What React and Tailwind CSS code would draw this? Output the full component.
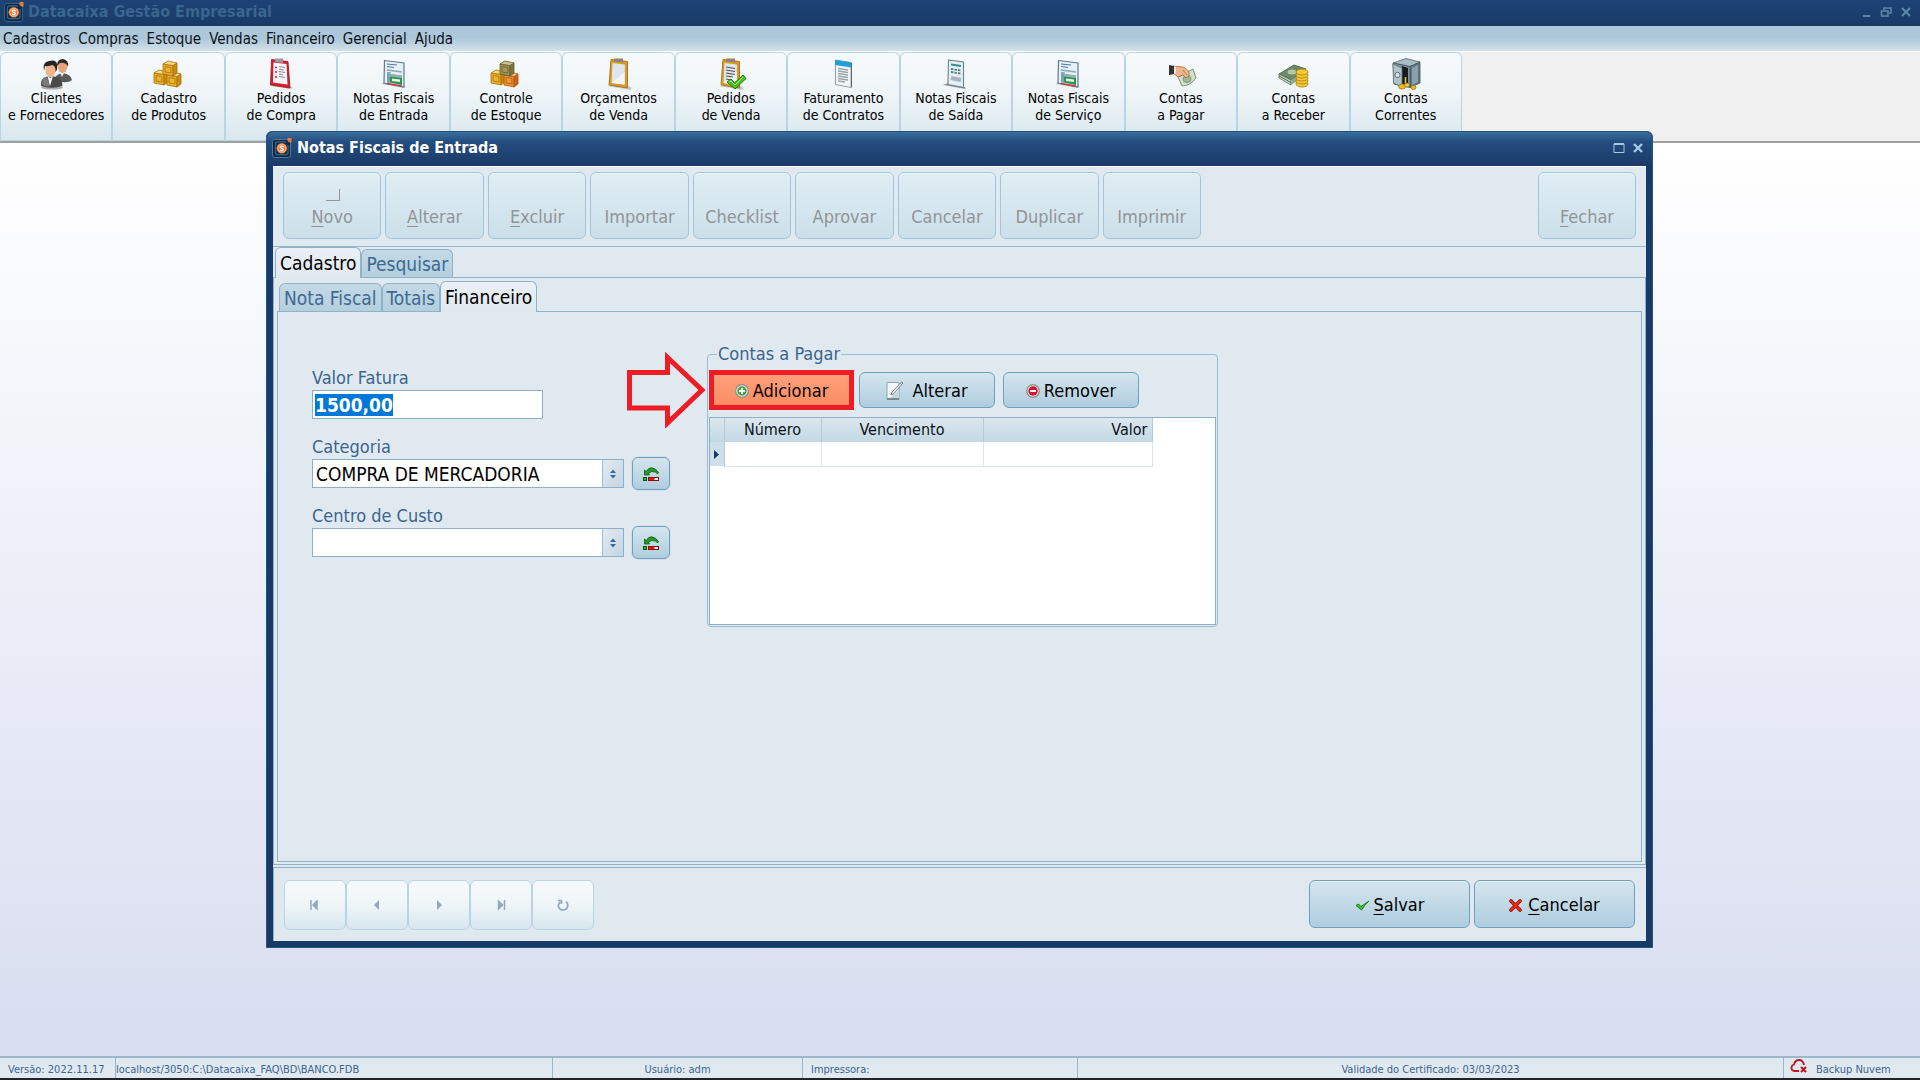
import React from "react";

const MENU = ["Cadastros", "Compras", "Estoque", "Vendas", "Financeiro", "Gerencial", "Ajuda"];

function AppLogo({ dim }) {
  return (
    <svg viewBox="0 0 20 20" className="w-5 h-5 shrink-0" aria-hidden="true">
      <rect x="0.5" y="1.5" width="18" height="18" rx="2.5" fill="#0b2c4a" stroke={dim ? "#3a607f" : "#55748f"} />
      <path d="M14 3.8H5.5Q3.5 3.8 3.5 6V14.5Q3.5 16.6 5.5 16.6H14Q16 16.6 16 14.5V7" fill="none" stroke="#41647f" strokeWidth="1.2" />
      <circle cx="9.8" cy="10.3" r="5.2" fill="#ee7437" />
      <circle cx="9.8" cy="10.3" r="4.4" fill="#fbc4a0" />
      <circle cx="9.8" cy="10.3" r="3.5" fill="#f0762f" />
      <path d="M11.8 8.8Q9.8 7.5 8.300 8.6Q7.800 10 9.8 10.3Q12 10.7 11.300 12.100Q9.8 13.100 7.800 11.9" fill="none" stroke="#fff" strokeWidth="1.2" />
      <path d="M15.5 0H19.5V4.5H17.5L15.5 3Z" fill="#ef7a35" />
    </svg>
  );
}

/* ---------- toolbar icons ---------- */

function PeopleIcon() {
  return (
    <svg viewBox="0 0 32 32" className="w-8 h-8" aria-hidden="true">
      <path d="M14 24Q15 16 22 15Q31 16 32 22Q29 25 22 24Z" fill="#5b5b5b" />
      <ellipse cx="22.5" cy="9" rx="4.6" ry="6" fill="#e8a27c" />
      <path d="M17 8Q17 1 23 1Q29 2 28 9Q26 4 20 5Z" fill="#292929" />
      <path d="M20 15L22 19L24 15Z" fill="#eee" />
      <ellipse cx="12" cy="29.5" rx="11" ry="2" fill="#aaa" />
      <path d="M1 28Q0 20 7 18.5H15Q23 20 22.500 28Q12 31.500 1 28Z" fill="#4a4a4a" />
      <path d="M2 26Q2 20 7 19L10 28Q4 29 2 26Z" fill="#7b7b7b" />
      <ellipse cx="10.5" cy="12" rx="5" ry="7" fill="#f3b28c" />
      <path d="M4 13Q2 4 9 3Q16 1 17 6Q18 11 15.500 14Q16 8 12 7Q7 9 5 8Z" fill="#252525" />
      <path d="M7.500 18L10 28L13 18L10.500 20Z" fill="#fafafa" />
    </svg>
  );
}

function Crate({ x, y, face, top, side, line }) {
  return (
    <g transform={`translate(${x} ${y})`}>
      <path d="M0 3L10 4.500V15L0 13Z" fill={face} stroke={line} strokeWidth=".8" />
      <path d="M10 4.500L14 2V12L10 15Z" fill={side} stroke={line} strokeWidth=".8" />
      <path d="M0 3L5 0L14 2L10 4.500Z" fill={top} stroke={line} strokeWidth=".8" />
      <path d="M2 5.500L8 6.500V12L2 11Z" fill="none" stroke={line} strokeWidth=".8" />
    </g>
  );
}

const GOLD = { face: "#e9b32c", top: "#f7d978", side: "#c98a12", line: "#a9700c" };
const OLIVE = { face: "#a3985a", top: "#cfc68e", side: "#7d733c", line: "#665c2c" };
const ORANGE = { face: "#f0953a", top: "#f9c27f", side: "#cc6518", line: "#b0540f" };

function CratesIcon({ topCrate = GOLD, rightCrate = GOLD }) {
  return (
    <svg viewBox="0 0 32 32" className="w-8 h-8" aria-hidden="true">
      <Crate x={1} y={12} {...GOLD} />
      <Crate x={14} y={14} {...rightCrate} />
      <Crate x={10} y={3} {...topCrate} />
    </svg>
  );
}

function RedClipboardIcon() {
  return (
    <svg viewBox="0 0 32 32" className="w-8 h-8" aria-hidden="true">
      <path d="M6 28L25 31L28 30L24 27Z" fill="#c9c9c9" />
      <path d="M6.500 1.500L23 3.500L25 30L5.500 27Z" fill="#d3202f" stroke="#a5121f" strokeWidth=".8" />
      <path d="M8.500 4.500L21.500 6L22.500 26.500L8 24.500Z" fill="#f6f6f8" />
      <path d="M10 0.500H18V5L10 4Z" fill="#99989f" />
      <path d="M10 9.500H12M10 14H12M10 19H12" stroke="#d3202f" strokeWidth="1.600" />
      <path d="M14 8.500L20 9.500M14 11L19 12M14 13.500L20 14.500M14 16L18 17M14 18.500L20 19.500" stroke="#8e8e98" strokeWidth="1.200" />
    </svg>
  );
}

function InvoiceIcon() {
  return (
    <svg viewBox="0 0 32 32" className="w-8 h-8" aria-hidden="true">
      <path d="M4 26L26 30L27 28L6 24Z" fill="#b4b8bc" />
      <path d="M6.500 2.500L26 5V29L6 25Z" fill="#e6f0f6" stroke="#5f7d90" strokeWidth="1.200" />
      <path d="M9 6L19 7M9 8.500L16 9.500" stroke="#5571ad" strokeWidth="1.200" />
      <path d="M9 12L24 14M9 14.500L13 15" stroke="#8ca6b8" strokeWidth="1.600" />
      <path d="M9 15H11.500V25L9 24.500Z" fill="#7e9cc9" />
      <path d="M11.500 16L24 17.500V27L11.500 24.500Z" fill="#2c9650" />
      <path d="M12 16L24 17.500V20L12 18.500Z" fill="#9dafba" />
      <path d="M14 20.500L22 21.500V24L14 23Z" fill="#e9f4ee" />
      <path d="M9 25.500L24 28" stroke="#d23a3a" strokeWidth="1.400" />
    </svg>
  );
}

function GoldClipboardIcon({ checked }) {
  return (
    <svg viewBox="0 0 32 32" className="w-8 h-8" aria-hidden="true">
      <path d="M4 28L27 32L29 30L24 27Z" fill="#c8c8c8" />
      <path d="M8 1.500L24.500 3.500V30L6 27Z" fill="#d99a2b" stroke="#a86f17" strokeWidth=".9" />
      <path d="M9.500 5L22 6.500L21.500 26.500L8.500 25Z" fill="#dfe6ea" />
      <path d="M22 14L21.500 26.500L8.500 25Z" fill="#f4f7f8" />
      <path d="M11 0.500H20V4.500L11 3.500Z" fill="#8e8371" />
      {checked && (
        <>
          <path d="M11 9L20 10.500M11 12L20 13.500M11 15L20 16.500M11 18L18 19M11 21L17 22" stroke="#535353" strokeWidth="1.200" />
          <path d="M12 24L16 21L19.500 25L28 17L31 20.500L20 31Z" fill="#45c420" stroke="#1c7d10" strokeWidth="1" />
          <path d="M14 24L16 23L20 27L28 19" fill="none" stroke="#a6ee85" strokeWidth="1" />
        </>
      )}
    </svg>
  );
}

function ContractIcon() {
  return (
    <svg viewBox="0 0 32 32" className="w-8 h-8" aria-hidden="true">
      <path d="M8.500 2L24 4.500V29.500L8.500 26.500Z" fill="#f2f5f7" stroke="#7b8a94" strokeWidth=".8" />
      <path d="M8 2L24.500 4.500V9.500L8 7Z" fill="#1e9fda" />
      <path d="M11 10.500L21 12M11 13L21 14.500M11 15.500L21 17M11 18L21 19.500M11 20.500L21 22M11 23L18 24" stroke="#9aa3a9" strokeWidth="1.300" />
      <path d="M24.500 5V29.500" stroke="#5f6b73" strokeWidth="1" />
    </svg>
  );
}

function OutgoingIcon() {
  return (
    <svg viewBox="0 0 32 32" className="w-8 h-8" aria-hidden="true">
      <path d="M3 27L8 25L25 29L26 31Z" fill="#969ca0" />
      <path d="M8.500 2L23.500 4V29.500L8 26.500Z" fill="#e6eff3" stroke="#6d818b" strokeWidth="1.100" />
      <path d="M11 6.500L21 8" stroke="#2f8f91" strokeWidth="2" />
      <path d="M11 11L21 12.500M11 14L21 15.500" stroke="#547f85" strokeWidth="1.800" strokeDasharray="2.500 1" />
      <path d="M11 20L21 22" stroke="#a4b4b9" strokeWidth="4" />
    </svg>
  );
}

function PayIcon() {
  return (
    <svg viewBox="0 0 32 32" className="w-8 h-8" aria-hidden="true">
      <path d="M13 19L28 11L31 20Q25 28 17 28Z" fill="#cfe0c7" stroke="#7d957a" strokeWidth="1" />
      <ellipse cx="22" cy="21" rx="4" ry="3.500" fill="#9cba93" stroke="#6c8a66" strokeWidth=".8" />
      <path d="M8 8L18 9Q25 12 24 18L21 20L18 17L13 19L8 15Z" fill="#eeb48d" stroke="#a8653e" strokeWidth=".8" />
      <path d="M18 12L22 17" stroke="#a8653e" strokeWidth=".8" />
      <path d="M4 7L9 8V16L4 17Z" fill="#37302e" />
      <path d="M9 8L11 9V15L9 16Z" fill="#e9e9e9" />
    </svg>
  );
}

function Coins({ x, y, count }) {
  return Array.from({ length: count }, (_, i) => (
    <ellipse key={i} cx={x} cy={y - i * 3} rx="6" ry="3" fill="#f5c936" stroke="#a87805" strokeWidth=".8" />
  ));
}

function ReceiveIcon() {
  return (
    <svg viewBox="0 0 32 32" className="w-8 h-8" aria-hidden="true">
      <path d="M2 16L17 7L29 11L14 22Z" fill="#6e8b68" stroke="#41593d" strokeWidth=".8" />
      <path d="M2 16V20L14 27V22Z" fill="#cfdcc8" stroke="#4f664b" strokeWidth=".8" />
      <path d="M2 18L14 24.500L22 19" fill="none" stroke="#4f664b" strokeWidth="1" />
      <path d="M14 22L22 17V22L14 27Z" fill="#93aa8c" />
      <ellipse cx="15" cy="14" rx="4.500" ry="2.500" fill="#b5c8ab" />
      <Coins x={25} y={26} count={5} />
    </svg>
  );
}

function SafeIcon() {
  return (
    <svg viewBox="0 0 32 32" className="w-8 h-8" aria-hidden="true">
      <path d="M3 5L16 0.500L30 4L20 8.500Z" fill="#a9bdc5" stroke="#56676f" strokeWidth=".8" />
      <path d="M20 8.500L30 4V25L20 29.500Z" fill="#5f7681" stroke="#45565f" strokeWidth=".8" />
      <path d="M22 10L28 7V24L22 27Z" fill="#8ba0a9" />
      <path d="M3 5L20 8.500V29.500L4 26Z" fill="#7f959f" stroke="#45565f" strokeWidth=".8" />
      <path d="M12 8L18 10V28L12 27Z" fill="#17191a" />
      <path d="M3 6L12 10V29L3.500 25Z" fill="#b1c2ca" stroke="#5c6e77" strokeWidth=".8" />
      <circle cx="7.500" cy="17" r="2.600" fill="#dce6ea" stroke="#5a6a72" strokeWidth="1" />
      <path d="M15.500 19V26" stroke="#e8cf28" strokeWidth="1.500" />
      <ellipse cx="12" cy="28.500" rx="3.500" ry="2.500" fill="#edbb2b" stroke="#9c7207" strokeWidth=".8" />
      <ellipse cx="17" cy="27" rx="2.500" ry="2" fill="#f5cd48" stroke="#9c7207" strokeWidth=".8" />
      <ellipse cx="23.500" cy="29.500" rx="2.500" ry="2" fill="#edbb2b" stroke="#9c7207" strokeWidth=".8" />
    </svg>
  );
}

const SHORTCUTS = [
  { lines: ["Clientes", "e Fornecedores"], icon: <PeopleIcon /> },
  { lines: ["Cadastro", "de Produtos"], icon: <CratesIcon /> },
  { lines: ["Pedidos", "de Compra"], icon: <RedClipboardIcon /> },
  { lines: ["Notas Fiscais", "de Entrada"], icon: <InvoiceIcon /> },
  { lines: ["Controle", "de Estoque"], icon: <CratesIcon topCrate={OLIVE} rightCrate={ORANGE} /> },
  { lines: ["Orçamentos", "de Venda"], icon: <GoldClipboardIcon /> },
  { lines: ["Pedidos", "de Venda"], icon: <GoldClipboardIcon checked /> },
  { lines: ["Faturamento", "de Contratos"], icon: <ContractIcon /> },
  { lines: ["Notas Fiscais", "de Saída"], icon: <OutgoingIcon /> },
  { lines: ["Notas Fiscais", "de Serviço"], icon: <InvoiceIcon /> },
  { lines: ["Contas", "a Pagar"], icon: <PayIcon /> },
  { lines: ["Contas", "a Receber"], icon: <ReceiveIcon /> },
  { lines: ["Contas", "Correntes"], icon: <SafeIcon /> },
];

/* ---------- main window ---------- */

function TitleBar() {
  return (
    <header className="h-[26px] flex items-center pl-1 pr-2 pb-0.5 bg-linear-to-b from-[#1d4375] to-[#183a67]">
      <AppLogo dim />
      <h1 className="ml-1 flex-1 text-[16px] leading-5 font-bold text-[#3a658f]">Datacaixa Gestão Empresarial</h1>
      <div className="flex gap-2 text-[#5f88af]">
        <button aria-label="Minimizar">
          <svg viewBox="0 0 12 12" className="w-3 h-3"><path d="M3 10H10" stroke="currentColor" strokeWidth="2" /></svg>
        </button>
        <button aria-label="Restaurar">
          <svg viewBox="0 0 12 12" className="w-3 h-3">
            <path d="M4 4V2H11V7H9" fill="none" stroke="currentColor" strokeWidth="1.500" />
            <path d="M1.500 5H8V10H1.500Z" fill="none" stroke="currentColor" strokeWidth="1.500" />
          </svg>
        </button>
        <button aria-label="Fechar janela">
          <svg viewBox="0 0 12 12" className="w-3 h-3"><path d="M2 2L10 10M10 2L2 10" stroke="currentColor" strokeWidth="2" /></svg>
        </button>
      </div>
    </header>
  );
}

function MenuBar() {
  return (
    <nav className="h-[26px] flex items-center gap-2 px-[3px] text-[15px] leading-5 text-[#0c1218] bg-linear-to-b from-[#adc7da] from-50% to-[#d3e1ea] border-b border-white">
      {MENU.map((item) => (
        <button key={item}>{item}</button>
      ))}
    </nav>
  );
}

function Shortcuts() {
  return (
    <div className="bg-[#f0f0f0] border-b-2 border-[#a0a0a0]">
      <div className="grid grid-cols-13 w-[1462px]">
        {SHORTCUTS.map((s) => (
          <button
            key={s.lines.join(" ")}
            className="h-[89px] flex flex-col items-center pt-[5px] text-[14px] leading-[17px] text-black border border-[#b9d5e4] rounded-t-md bg-linear-to-b from-[#f7fafc] via-[#eef4f7] to-[#d9e8ef]"
          >
            {s.icon}
            <span>{s.lines[0]}</span>
            <span>{s.lines[1]}</span>
          </button>
        ))}
      </div>
    </div>
  );
}

function StatusBar() {
  return (
    <footer className="h-6 overflow-hidden border-b-2 border-[#202428] bg-[#e1e9f0] text-[11px] leading-6 text-[#3a658f]">
      <div className="grid grid-cols-[116fr_437fr_250fr_275fr_706fr_136fr] border-t-2 border-[#9bb7ce]">
        <span className="px-2 border-r border-[#9bb7ce]">Versão: 2022.11.17</span>
        <span className="border-r border-[#9bb7ce]">localhost/3050:C:\Datacaixa_FAQ\BD\BANCO.FDB</span>
        <span className="text-center border-r border-[#9bb7ce]">Usuário: adm</span>
        <span className="px-2 border-r border-[#9bb7ce]">Impressora:</span>
        <span className="text-center border-r border-[#9bb7ce]">Validade do Certificado: 03/03/2023</span>
        <span className="flex gap-2 px-1.5">
          <svg viewBox="0 0 18 16" className="w-[18px] h-4" aria-hidden="true">
            <path d="M9 13H4Q1 12 1.500 9Q2 7 4 6.500Q5 2 9 2Q13 2 14 7" fill="none" stroke="#c4161c" strokeWidth="1.800" />
            <path d="M11 9L16 14M16 9L11 14" stroke="#c4161c" strokeWidth="2" />
          </svg>
          Backup Nuvem
        </span>
      </div>
    </footer>
  );
}

/* ---------- dialog ---------- */

const ACTIONS = [
  { label: "Novo", hotkey: true, mark: true },
  { label: "Alterar", hotkey: true },
  { label: "Excluir", hotkey: true },
  { label: "Importar" },
  { label: "Checklist" },
  { label: "Aprovar" },
  { label: "Cancelar" },
  { label: "Duplicar" },
  { label: "Imprimir" },
];

function Caption({ label, hotkey }) {
  if (!hotkey) return <span>{label}</span>;
  return (
    <span>
      <span className="underline underline-offset-3 decoration-1">{label[0]}</span>
      {label.slice(1)}
    </span>
  );
}

function ActionButton({ label, hotkey, mark }) {
  return (
    <button
      disabled
      className="h-[67px] w-full flex flex-col items-center justify-end pb-[9px] text-[18px] leading-6 text-[#929496] border border-[#a1c5da] rounded-md bg-linear-to-b from-[#e0eef4] to-[#cbdfea] inset-shadow-[0_1px_0_#f2f8fa]"
    >
      {mark && <span className="w-[14px] h-3 ml-px mb-1 border-r border-b border-[#929496]" />}
      <Caption label={label} hotkey={hotkey} />
    </button>
  );
}

function Tab({ active, children }) {
  return (
    <button
      role="tab"
      aria-selected={!!active}
      className={
        active
          ? "relative h-[31px] -mb-px px-1 text-[19px] leading-6 text-black border border-b-0 border-[#8fb2cb] rounded-t-md bg-linear-to-b from-[#eaf0f5] to-[#e1e9f0]"
          : "h-7 px-1 text-[19px] leading-6 text-[#3c6a94] border border-b-0 border-[#8fb2cb] rounded-t-md bg-linear-to-b from-[#c5d9e5] to-[#b5cfdf]"
      }
    >
      {children}
    </button>
  );
}

function RefreshListButton({ label }) {
  return (
    <button
      aria-label={label}
      className="w-[38px] h-[33px] flex items-center justify-center border border-[#6fa0c0] rounded-md bg-linear-to-b from-[#d5e5ee] to-[#afcddf] shadow-[0_0_0_1px_#d4e0e9]"
    >
      <svg viewBox="0 0 16 14" className="w-4 h-3.5" aria-hidden="true">
        <path d="M1.500 3V8H6.500L5.300 6Q9 3.600 12.500 5L14.500 7L15.500 5.500Q12.500 1 8.500 0.800Q5 0.800 3.500 4.500Z" fill="#239a26" stroke="#0c5c10" strokeWidth=".8" />
        <rect x=".5" y="10.500" width="3" height="3" fill="#35b436" stroke="#0b520e" />
        <rect x="5.500" y="10.500" width="10" height="3" fill="#fff" stroke="#8c0d0d" />
        <rect x="6" y="11" width="5.500" height="2" fill="#e21a12" />
      </svg>
    </button>
  );
}

function SelectField({ id, label, value }) {
  return (
    <div>
      <label htmlFor={id} className="block h-6 text-[18px] leading-7 text-[#3a658f]">{label}</label>
      <div className="h-[33px] flex items-center gap-2">
        <div className="relative w-[312px]">
          <select
            id={id}
            defaultValue={value}
            className="block w-full h-[29px] pl-[3px] pr-6 appearance-none rounded-none text-[19px] text-black bg-white border border-[#8cb0ca]"
          >
            <option>{value}</option>
          </select>
          <span className="absolute right-px top-px w-[21px] h-[27px] flex items-center justify-center pointer-events-none border-l border-[#9fbdd2] bg-linear-to-br from-[#e2eaf1] to-[#c6d5e2]">
            <svg viewBox="0 0 8 10" className="w-2 h-2.5" aria-hidden="true">
              <path d="M1 4L4 0.500L7 4ZM1 6L4 9.500L7 6Z" fill="#39679a" />
            </svg>
          </span>
        </div>
        <RefreshListButton label={`Atualizar ${label}`} />
      </div>
    </div>
  );
}

function InvoiceForm() {
  return (
    <form className="w-[358px] mt-5 flex flex-col gap-3" onSubmit={(e) => e.preventDefault()}>
      <div>
        <label htmlFor="valor" className="block h-6 text-[18px] leading-7 text-[#3a658f]">Valor Fatura</label>
        <div className="h-[33px] flex items-center">
          <input
            id="valor"
            autoFocus
            onFocus={(e) => e.target.select()}
            defaultValue="1500,00"
            className="w-[231px] h-[29px] px-0.5 text-[19px] font-bold text-black bg-white border border-[#8cb0ca] outline-none selection:bg-[#0078d7] selection:text-white"
          />
        </div>
      </div>
      <SelectField id="categoria" label="Categoria" value="COMPRA DE MERCADORIA" />
      <SelectField id="centro" label="Centro de Custo" value="" />
    </form>
  );
}

function PlusIcon() {
  return (
    <svg viewBox="0 0 14 14" className="w-3.5 h-3.5" aria-hidden="true">
      <circle cx="7" cy="7" r="6.300" fill="#f0f0f0" stroke="#8f8d88" strokeWidth="1.200" />
      <circle cx="7" cy="7" r="4.700" fill="#47a34b" />
      <path d="M7 4V10M4 7H10" stroke="#fff" strokeWidth="1.800" />
    </svg>
  );
}

function MinusIcon() {
  return (
    <svg viewBox="0 0 14 14" className="w-3.5 h-3.5" aria-hidden="true">
      <circle cx="7" cy="7" r="6.300" fill="#e8e4e2" stroke="#8f8d88" strokeWidth="1.200" />
      <circle cx="7" cy="7" r="4.700" fill="#d8122f" />
      <path d="M4 7H10" stroke="#fff" strokeWidth="2" />
    </svg>
  );
}

function EditIcon() {
  return (
    <svg viewBox="0 0 18 20" className="w-[18px] h-5" aria-hidden="true">
      <path d="M1 1.500H13V18.500H1Z" fill="#f3f8fb" stroke="#92a5b1" strokeWidth="1" />
      <path d="M1 17H13V19H1Z" fill="#7c8890" />
      <path d="M13 9V17H4Z" fill="#c3d7e3" />
      <path d="M5 14L6 11L15.500 1L17 2L8 12.500Z" fill="#e9edf0" stroke="#66747d" strokeWidth=".9" />
    </svg>
  );
}

function Payables() {
  return (
    <fieldset className="relative min-w-0 w-[511px] h-[283px] flex flex-col px-px pb-px border border-[#9cbcd3] rounded-sm">
      <legend className="ml-2 px-px text-[18px] leading-5 text-[#3a658f]">Contas a Pagar</legend>

      {/* callout arrow pointing at Adicionar */}
      <svg viewBox="0 0 79 76" className="absolute right-full -top-3 mr-0.5 w-[79px] h-[76px]" aria-hidden="true">
        <path d="M2.500 20.500H40.500V5.500L75 38L40.500 71V56H2.500Z" fill="none" stroke="#ee1c24" strokeWidth="5" />
      </svg>

      <div className="flex items-center mt-1.5 text-[18px] leading-6 text-black">
        <button className="w-[145px] h-10 flex items-center justify-center gap-1 pt-0.5 border-[5px] border-[#ee1c24] bg-linear-to-b from-[#ffa07a] to-[#f98d63]">
          <PlusIcon />
          Adicionar
        </button>
        <button className="w-[136px] h-9 ml-[5px] flex items-center justify-center gap-2 pt-0.5 border border-[#6fa0c0] rounded-md bg-linear-to-b from-[#d5e5ee] to-[#afcddf]">
          <EditIcon />
          Alterar
        </button>
        <button className="w-[136px] h-9 ml-2 flex items-center justify-center gap-1 pt-0.5 border border-[#6fa0c0] rounded-md bg-linear-to-b from-[#d5e5ee] to-[#afcddf]">
          <MinusIcon />
          Remover
        </button>
      </div>

      <div className="flex-1 mt-[7px] bg-white border border-[#8cb0ca]">
        <table className="w-[442px] table-fixed border-collapse text-[16px] leading-5 text-[#0c1218]">
          <colgroup>
            <col className="w-[14px]" />
            <col className="w-[97px]" />
            <col className="w-[162px]" />
            <col className="w-[169px]" />
          </colgroup>
          <thead>
            <tr className="h-6 bg-linear-to-b from-[#dde7ee] to-[#c1d8e4]">
              <th aria-label="Atual" className="border-r border-[#b0cbdc]" />
              <th className="font-normal border-r border-[#b0cbdc]">Número</th>
              <th className="font-normal border-r border-[#b0cbdc]">Vencimento</th>
              <th className="font-normal text-right pr-1 border-r border-[#b0cbdc]">Valor</th>
            </tr>
          </thead>
          <tbody>
            <tr className="h-6">
              <td className="bg-[#cfdfea] border-r border-[#b0cbdc]">
                <svg viewBox="0 0 5 9" className="w-[5px] h-[9px] mx-auto" aria-hidden="true">
                  <path d="M0 0L5 4.500L0 9Z" fill="#12396b" />
                </svg>
              </td>
              <td className="border-r border-b border-[#dbe5ed]" />
              <td className="border-r border-b border-[#dbe5ed]" />
              <td className="border-r border-b border-[#dbe5ed]" />
            </tr>
          </tbody>
        </table>
      </div>
    </fieldset>
  );
}

const NAV = [
  { label: "Primeiro", draw: <path d="M4 3V13M6 8L10 4V12Z" fill="#93a8c0" stroke="#93a8c0" strokeWidth="1.500" /> },
  { label: "Anterior", draw: <path d="M5 8L10 3V13Z" fill="#93a8c0" /> },
  { label: "Próximo", draw: <path d="M6 3L11 8L6 13Z" fill="#93a8c0" /> },
  { label: "Último", draw: <path d="M11.500 3V13M5.500 4L9.500 8L5.500 12Z" fill="#93a8c0" stroke="#93a8c0" strokeWidth="1.500" /> },
  {
    label: "Atualizar",
    draw: (
      <>
        <path d="M5.500 5Q2.500 7.500 3.500 10Q5 13 8 13Q11.500 13 12.500 10Q13.500 7 11 4.500" fill="none" stroke="#93a8c0" strokeWidth="1.700" />
        <path d="M3 3.500H6.500V7" fill="none" stroke="#93a8c0" strokeWidth="1.500" />
      </>
    ),
  },
];

function DialogFooter() {
  return (
    <div className="h-[74px] flex items-start justify-between mt-0.5 pl-2.5 pr-[11px] pt-3 border-t border-l border-[#93afc8]">
      <div className="flex">
        {NAV.map((n) => (
          <button
            key={n.label}
            aria-label={n.label}
            className="w-[62px] h-[50px] flex items-center justify-center border border-[#b9d5e4] rounded-md bg-linear-to-b from-[#f7fafc] via-[#eff5f8] to-[#d7e7ef]"
          >
            <svg viewBox="0 0 16 16" className="w-4 h-4" aria-hidden="true">{n.draw}</svg>
          </button>
        ))}
      </div>
      <div className="flex gap-1 text-[18px] leading-6 text-black">
        <button className="w-[161px] h-12 flex items-center justify-center gap-1 pt-0.5 border border-[#6fa0c0] rounded-md bg-linear-to-b from-[#d5e5ee] to-[#afcddf] inset-shadow-[0_1px_0_#e6f1f6]">
          <svg viewBox="0 0 15 11" className="w-[15px] h-[11px]" aria-hidden="true">
            <path d="M1 5.500L3.500 4L6 6.500L14 1Q9.500 5 6.500 10Z" fill="#3ec22c" stroke="#15780f" strokeWidth=".9" />
          </svg>
          <Caption label="Salvar" hotkey />
        </button>
        <button className="w-[161px] h-12 flex items-center justify-center gap-1.5 pt-0.5 border border-[#6fa0c0] rounded-md bg-linear-to-b from-[#d5e5ee] to-[#afcddf] inset-shadow-[0_1px_0_#e6f1f6]">
          <svg viewBox="0 0 13 13" className="w-[13px] h-[13px]" aria-hidden="true">
            <path d="M2 2L11 11M11 2L2 11" stroke="#8e0f0a" strokeWidth="3.600" strokeLinecap="round" />
            <path d="M2 2L11 11M11 2L2 11" stroke="#ee2a14" strokeWidth="2.200" strokeLinecap="round" />
          </svg>
          <Caption label="Cancelar" hotkey />
        </button>
      </div>
    </div>
  );
}

function InvoiceDialog() {
  return (
    <section
      role="dialog"
      aria-label="Notas Fiscais de Entrada"
      className="absolute left-[266px] right-[267px] top-[131px] bottom-[132px] flex flex-col px-1.5 pb-1.5 rounded-t-md bg-[#193a66] border border-[#23547f]"
    >
      <div className="h-[34px] -mx-1.5 flex items-center pl-[5px] pr-2 pb-0.5 rounded-t-md bg-linear-to-b from-[#3b6e9b] via-[#234c7e] via-30% to-[#1a3a67]">
        <AppLogo />
        <h2 className="ml-[5px] flex-1 text-[16px] leading-5 font-bold text-white">Notas Fiscais de Entrada</h2>
        <div className="flex gap-[7px] text-[#a4c9e6]">
          <button aria-label="Maximizar">
            <svg viewBox="0 0 12 12" className="w-3 h-3">
              <path d="M1 2H11V10.500H1Z" fill="none" stroke="currentColor" strokeWidth="1" />
              <path d="M1 2H11" stroke="currentColor" strokeWidth="2" />
            </svg>
          </button>
          <button aria-label="Fechar diálogo">
            <svg viewBox="0 0 12 12" className="w-3 h-3"><path d="M2 2L10 10M10 2L2 10" stroke="currentColor" strokeWidth="2.400" /></svg>
          </button>
        </div>
      </div>

      <div className="flex-1 flex flex-col bg-[#e1e9f0] border-t border-white">
        <div className="flex justify-between h-20 pt-[5px] px-2.5 border-b border-[#93b6cf]">
          <div className="grid grid-cols-9 gap-1 w-[918px]">
            {ACTIONS.map((a) => (
              <ActionButton key={a.label} {...a} />
            ))}
          </div>
          <div className="w-[98px]">
            <ActionButton label="Fechar" hotkey />
          </div>
        </div>

        <div role="tablist" className="h-[30px] flex items-end pl-0.5">
          <Tab active>Cadastro</Tab>
          <Tab>Pesquisar</Tab>
        </div>
        <div className="flex-1 flex flex-col px-[3px] pt-[3px] pb-0.5 border border-[#8fb2cb]">
          <div role="tablist" className="h-[30px] flex items-end pl-0.5">
            <Tab>Nota Fiscal</Tab>
            <Tab>Totais</Tab>
            <Tab active>Financeiro</Tab>
          </div>
          <div className="flex-1 flex items-start gap-[37px] pl-[34px] pt-8 border border-[#8fb2cb]">
            <InvoiceForm />
            <Payables />
          </div>
        </div>

        <DialogFooter />
      </div>
    </section>
  );
}

export default function App() {
  return (
    <div className="relative min-h-screen flex flex-col font-['DejaVu_Sans_Condensed','Noto_Sans',sans-serif]">
      <TitleBar />
      <MenuBar />
      <Shortcuts />
      <main className="flex-1 bg-linear-to-b from-white to-[#d8ddf0]" />
      <StatusBar />
      <InvoiceDialog />
    </div>
  );
}
